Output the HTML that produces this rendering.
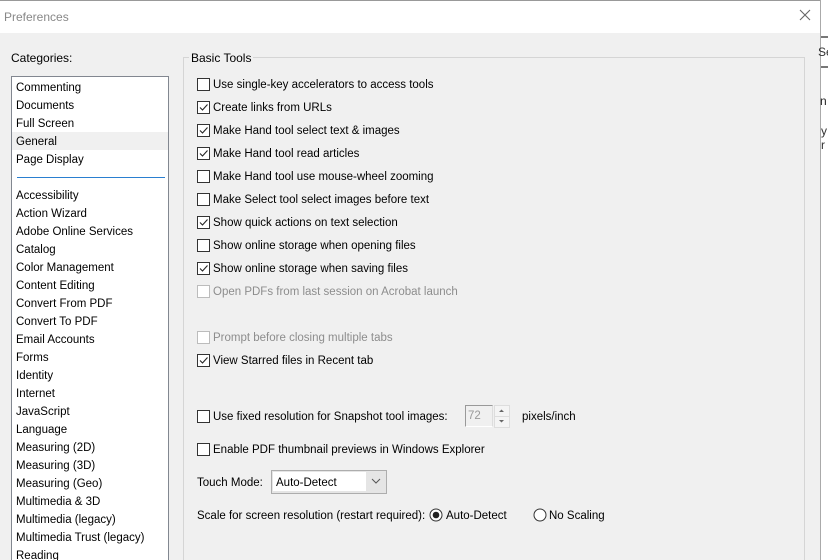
<!DOCTYPE html>
<html><head><style>
html,body{margin:0;width:828px;height:560px;overflow:hidden}
body{background:#f0f0f0;font-family:"Liberation Sans",sans-serif;font-size:11.5px;color:#000;position:relative}
.a{position:absolute;white-space:nowrap}
.cb{position:absolute;width:11px;height:11px;border:1px solid #333;background:#fff}
.cb.d{border-color:#bcbcbc}
.cb svg{position:absolute;left:0;top:0}
.lbl{position:absolute;white-space:nowrap;line-height:14px}
.dis{color:#8d8d8d}
.li{position:absolute;left:4px;line-height:18px;height:18px;width:152px}
</style></head><body>
<div class="a" style="left:0;top:0;width:820px;height:32px;background:#fff;border-top:1px solid #999"></div>
<div class="a" style="left:4px;top:10px;color:#888;font-size:12px">Preferences</div>
<svg class="a" style="left:799px;top:9px" width="12" height="12"><path d="M1 1L11 11M11 1L1 11" stroke="#666" stroke-width="1.1"/></svg>
<div class="a" style="left:820px;top:0;width:1px;height:560px;background:#aaa"></div>
<div class="a" style="left:821px;top:0;width:7px;height:560px;background:#fff"></div>
<div class="a" style="left:821px;top:36px;width:7px;height:2px;background:#777"></div>
<div class="a" style="left:821px;top:66px;width:7px;height:2px;background:#777"></div>
<div class="a" style="left:818px;top:45px;font-size:12px;color:#333">Se</div>
<div class="a" style="left:820px;top:94px;font-size:12px;color:#222">n</div>
<div class="a" style="left:821px;top:124px;font-size:12px;color:#333">y</div>
<div class="a" style="left:821px;top:138px;font-size:12px;color:#333">r <span style="color:#c80">c</span></div>

<div class="a" style="left:11px;top:51px;font-size:12px">Categories:</div>
<div class="a" style="left:11px;top:76px;width:156px;height:490px;background:#fff;border:1px solid #828790">
<div class="a" style="left:0;top:55px;width:156px;height:18px;background:#f0f0f0"></div>
<div class="li" style="top:2px">Commenting</div>
<div class="li" style="top:20px">Documents</div>
<div class="li" style="top:38px">Full Screen</div>
<div class="li" style="top:56px">General</div>
<div class="li" style="top:74px">Page Display</div>
<div class="a" style="left:5px;top:100px;width:148px;height:1px;background:#2a7fd0"></div>
<div class="li" style="top:110px">Accessibility</div>
<div class="li" style="top:128px">Action Wizard</div>
<div class="li" style="top:146px">Adobe Online Services</div>
<div class="li" style="top:164px">Catalog</div>
<div class="li" style="top:182px">Color Management</div>
<div class="li" style="top:200px">Content Editing</div>
<div class="li" style="top:218px">Convert From PDF</div>
<div class="li" style="top:236px">Convert To PDF</div>
<div class="li" style="top:254px">Email Accounts</div>
<div class="li" style="top:272px">Forms</div>
<div class="li" style="top:290px">Identity</div>
<div class="li" style="top:308px">Internet</div>
<div class="li" style="top:326px">JavaScript</div>
<div class="li" style="top:344px">Language</div>
<div class="li" style="top:362px">Measuring (2D)</div>
<div class="li" style="top:380px">Measuring (3D)</div>
<div class="li" style="top:398px">Measuring (Geo)</div>
<div class="li" style="top:416px">Multimedia &amp; 3D</div>
<div class="li" style="top:434px">Multimedia (legacy)</div>
<div class="li" style="top:452px">Multimedia Trust (legacy)</div>
<div class="li" style="top:470px">Reading</div>
</div>

<div class="a" style="left:183px;top:57px;width:620px;height:510px;border:1px solid #d5d5d5"></div>
<div class="a" style="left:189px;top:51px;background:#f0f0f0;padding:0 2px;font-size:12px">Basic Tools</div>

<div id="rows"></div>
<script>
var rows=[[84,"Use single-key accelerators to access tools",0],[107,"Create links from URLs",1],[130,"Make Hand tool select text &amp; images",1],[153,"Make Hand tool read articles",1],[176,"Make Hand tool use mouse-wheel zooming",0],[199,"Make Select tool select images before text",0],[222,"Show quick actions on text selection",1],[245,"Show online storage when opening files",0],[268,"Show online storage when saving files",1],[291,"Open PDFs from last session on Acrobat launch",2],[337,"Prompt before closing multiple tabs",2],[360,"View Starred files in Recent tab",1],[416,"Use fixed resolution for Snapshot tool images:",0],[449,"Enable PDF thumbnail previews in Windows Explorer",0]];
var h="";rows.forEach(function(r){var y=r[0];h+='<div class="cb'+(r[2]==2?' d':'')+'" style="left:197px;top:'+(y-6)+'px">'+(r[2]==1?'<svg width="11" height="11"><path d="M2 5.5L4.5 8L9.5 2.5" fill="none" stroke="#222" stroke-width="1.1"/></svg>':'')+'</div><div class="lbl'+(r[2]==2?' dis':'')+'" style="left:213px;top:'+(y-6)+'px">'+r[1]+'</div>';});
document.getElementById("rows").innerHTML=h;
</script>

<div class="a" style="left:465px;top:405px;width:24px;height:20px;border:1px solid #999;border-right-color:#ddd;border-bottom-color:#fff;color:#999;line-height:20px;padding-left:2px">72</div>
<div class="a" style="left:494px;top:405px;width:14px;height:10px;border:1px solid #ddd;background:#f4f4f4"></div>
<div class="a" style="left:494px;top:416px;width:14px;height:10px;border:1px solid #ddd;background:#f4f4f4"></div>
<svg class="a" style="left:497px;top:407px" width="9" height="18"><path d="M2 5L4.5 2.5L7 5Z M2 13L4.5 15.5L7 13Z" fill="#666"/></svg>
<div class="lbl" style="left:522px;top:410px">pixels/inch</div>

<div class="lbl" style="left:197px;top:476px">Touch Mode:</div>
<div class="a" style="left:271px;top:470px;width:114px;height:22px;border:1px solid #adadad;background:#e5e5e5"></div>
<div class="a" style="left:273px;top:472px;width:93px;height:19px;background:#fff"></div>
<div class="lbl" style="left:276px;top:476px">Auto-Detect</div>
<svg class="a" style="left:371px;top:478px" width="10" height="6"><path d="M1 1L5 5L9 1" fill="none" stroke="#555"/></svg>

<div class="lbl" style="left:197px;top:509px">Scale for screen resolution (restart required):</div>
<svg class="a" style="left:429px;top:508px" width="14" height="14"><circle cx="7" cy="7" r="6" fill="#fff" stroke="#333"/><circle cx="7" cy="7" r="3.3" fill="#222"/></svg>
<div class="lbl" style="left:446px;top:509px">Auto-Detect</div>
<svg class="a" style="left:533px;top:508px" width="14" height="14"><circle cx="7" cy="7" r="6" fill="#fff" stroke="#333"/></svg>
<div class="lbl" style="left:549px;top:509px">No Scaling</div>
</body></html>
